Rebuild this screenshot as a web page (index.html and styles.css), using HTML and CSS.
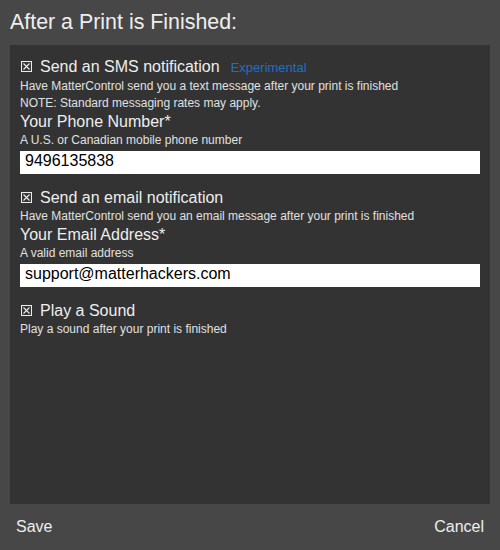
FILE: index.html
```html
<!DOCTYPE html>
<html lang="en">

<head>
	<meta charset="utf-8">
	<title>After a Print is Finished</title>
	<link rel="stylesheet" href="styles.css">
</head>

<body>

	<div class="window">

		<h1 class="title">After a Print is Finished:</h1>

		<div class="panel">

			<div class="option">
				<label class="option-title"><svg class="check" width="11" height="11" viewBox="0 0 11 11"><rect x="0.5" y="0.5" width="10" height="10"/><path d="M2.5 2.5 L8.5 8.5 M8.5 2.5 L2.5 8.5"/></svg>Send an SMS notification<span class="tag">Experimental</span></label>
				<p class="hint">Have MatterControl send you a text message after your print is finished</p>
				<p class="hint">NOTE: Standard messaging rates may apply.</p>
				<h2 class="field-label">Your Phone Number*</h2>
				<p class="hint">A U.S. or Canadian mobile phone number</p>
				<input class="field" type="text" value="9496135838">
			</div>

			<div class="option">
				<label class="option-title"><svg class="check" width="11" height="11" viewBox="0 0 11 11"><rect x="0.5" y="0.5" width="10" height="10"/><path d="M2.5 2.5 L8.5 8.5 M8.5 2.5 L2.5 8.5"/></svg>Send an email notification</label>
				<p class="hint">Have MatterControl send you an email message after your print is finished</p>
				<h2 class="field-label">Your Email Address*</h2>
				<p class="hint">A valid email address</p>
				<input class="field" type="text" value="support@matterhackers.com">
			</div>

			<div class="option">
				<label class="option-title"><svg class="check" width="11" height="11" viewBox="0 0 11 11"><rect x="0.5" y="0.5" width="10" height="10"/><path d="M2.5 2.5 L8.5 8.5 M8.5 2.5 L2.5 8.5"/></svg>Play a Sound</label>
				<p class="hint">Play a sound after your print is finished</p>
			</div>

		</div>

		<footer class="buttons">
			<button type="button" class="btn">Save</button>
			<button type="button" class="btn">Cancel</button>
		</footer>

	</div>

</body>
</html>
```

FILE: styles.css
```css
html,
body {
	margin: 0;
	background: #474747;
}

body {
	font-family: "Liberation Sans", "Arial", sans-serif;
	color: #eeeeee;
}

.window {
	width: 500px;
	height: 550px;
	display: flex;
	flex-direction: column;
}

.title {
	margin: 0;
	padding: 10px 10px 0;
	font-size: 21.4px;
	font-weight: normal;
	line-height: 24px;
}

.panel {
	margin: 11px 10px 0;
	padding: 12px 10px 0;
	height: 459px;
	box-sizing: border-box;
	background: #333333;
}

.option + .option {
	margin-top: 14px;
}

.option-title {
	display: block;
	font-size: 16px;
	line-height: 20px;
	white-space: nowrap;
}

.check {
	margin: 0 8px 0 1px;
	vertical-align: 0;
	fill: none;
	stroke: #ececec;
	stroke-width: 1.1;
}

.tag {
	margin-left: 11px;
	font-size: 13px;
	color: #1f6fc5;
}

.hint {
	margin: 0;
	font-size: 12px;
	line-height: 17px;
	color: #e0e0e0;
}

.field-label {
	margin: 0;
	font-size: 16px;
	font-weight: normal;
	line-height: 20px;
}

.field {
	display: block;
	box-sizing: border-box;
	width: 460px;
	height: 23px;
	margin-top: 2px;
	padding: 0 5px 4px;
	border: 0;
	outline: none;
	background: #ffffff;
	color: #000000;
	font-family: inherit;
	font-size: 16px;
	line-height: 19px;
}

.buttons {
	display: flex;
	justify-content: space-between;
	padding: 14px 16px 0;
}

.btn {
	padding: 0;
	border: 0;
	background: none;
	color: #eeeeee;
	font-family: inherit;
	font-size: 16px;
	line-height: 18px;
}
```
